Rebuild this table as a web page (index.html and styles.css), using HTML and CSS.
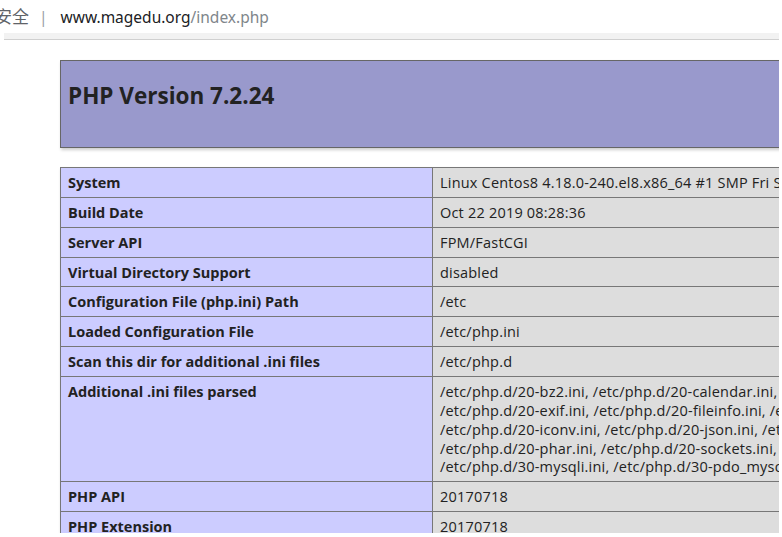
FILE: index.html
```html
<!DOCTYPE html>
<html>
<head>
<meta charset="utf-8">
<link rel="stylesheet" href="styles.css">
</head>
<body>
<div class="viewport">
  <div class="chrome">
    <div class="addr">
      <span class="secure">安全</span>
      <span class="sep">|</span>
      <span class="host">www.magedu.org</span><span class="path">/index.php</span>
    </div>
  </div>
  <div class="band"></div>
  <div class="page">
    <div class="h"><h1>PHP Version 7.2.24</h1></div>
    <table class="info">
      <colgroup><col class="c1"><col class="c2"></colgroup>
      <tr><td class="e">System</td><td class="v">Linux Centos8 4.18.0-240.el8.x86_64 #1 SMP Fri Sep 25 19:48:47 UTC 2020 x86_64</td></tr>
      <tr><td class="e">Build Date</td><td class="v">Oct 22 2019 08:28:36</td></tr>
      <tr><td class="e">Server API</td><td class="v">FPM/FastCGI</td></tr>
      <tr><td class="e">Virtual Directory Support</td><td class="v">disabled</td></tr>
      <tr><td class="e">Configuration File (php.ini) Path</td><td class="v">/etc</td></tr>
      <tr><td class="e">Loaded Configuration File</td><td class="v">/etc/php.ini</td></tr>
      <tr><td class="e">Scan this dir for additional .ini files</td><td class="v">/etc/php.d</td></tr>
      <tr><td class="e">Additional .ini files parsed</td><td class="v">/etc/php.d/20-bz2.ini, /etc/php.d/20-calendar.ini, /etc/php.d/20-ctype.ini, /etc/php.d/20-curl.ini, /etc/php.d/20-dom.ini,<br>/etc/php.d/20-exif.ini, /etc/php.d/20-fileinfo.ini, /etc/php.d/20-ftp.ini, /etc/php.d/20-gettext.ini,<br>/etc/php.d/20-iconv.ini, /etc/php.d/20-json.ini, /etc/php.d/20-mbstring.ini, /etc/php.d/20-mysqlnd.ini, /etc/php.d/20-pdo.ini,<br>/etc/php.d/20-phar.ini, /etc/php.d/20-sockets.ini, /etc/php.d/20-simplexml.ini, /etc/php.d/20-sqlite3.ini,<br>/etc/php.d/30-mysqli.ini, /etc/php.d/30-pdo_mysql.ini, /etc/php.d/30-pdo_sqlite.ini, /etc/php.d/30-xmlreader.ini</td></tr>
      <tr><td class="e">PHP API</td><td class="v">20170718</td></tr>
      <tr><td class="e">PHP Extension</td><td class="v">20170718</td></tr>
      <tr><td class="e">Zend Extension</td><td class="v">320170718</td></tr>
    </table>
  </div>
</div>
</body>
</html>
```
FILE: styles.css
```css
html, body {
  margin: 0;
  padding: 0;
  background: #fff;
}
.viewport {
  width: 779px;
  height: 533px;
  overflow: hidden;
  font-family: "Open Sans", "Noto Sans", sans-serif;
  color: #222;
}
.chrome {
  height: 33px;
  background: #fff;
}
.addr {
  display: flex;
  align-items: baseline;
  margin-left: -5px;
  padding-top: 5px;
  font-family: "Noto Sans", "Noto Sans CJK SC", sans-serif;
  font-size: 15.5px;
  line-height: 24px;
  white-space: nowrap;
}
.secure { color: #5f6368; font-size: 17px; }
.sep { color: #9aa0a6; margin: 0 13px 0 10px; }
.host { color: #202124; }
.path { color: #80868b; }
.band {
  height: 6px;
  margin-left: 4px;
  background: #f2f2f2;
  border-bottom: 1px solid #d0d0d0;
}
.page {
  padding: 20px 0 0 60px;
}
.h {
  width: 900px;
  height: 88px;
  background: #99c;
  border: 1px solid #666;
  box-shadow: 1px 2px 3px #ccc;
  box-sizing: border-box;
  padding: 0 7px;
}
.h h1 {
  margin: 0;
  padding-top: 20px;
  font-size: 22.5px;
  line-height: 30px;
  font-weight: bold;
  color: #222;
}
.info {
  margin-top: 19px;
  border-collapse: collapse;
  table-layout: fixed;
  width: 1100px;
  box-shadow: 1px 2px 3px #ccc;
  font-size: 14.5px;
  line-height: 18.86px;
}
.info col.c1 { width: 372px; }
.info td {
  border: 1px solid #777;
  padding: 6px 6px 4px 7px;
  vertical-align: baseline;
  white-space: nowrap;
  overflow: hidden;
}
.info td.e {
  background: #ccf;
  font-weight: bold;
}
.info td.v {
  background: #ddd;
  letter-spacing: 0.2px;
}
```
